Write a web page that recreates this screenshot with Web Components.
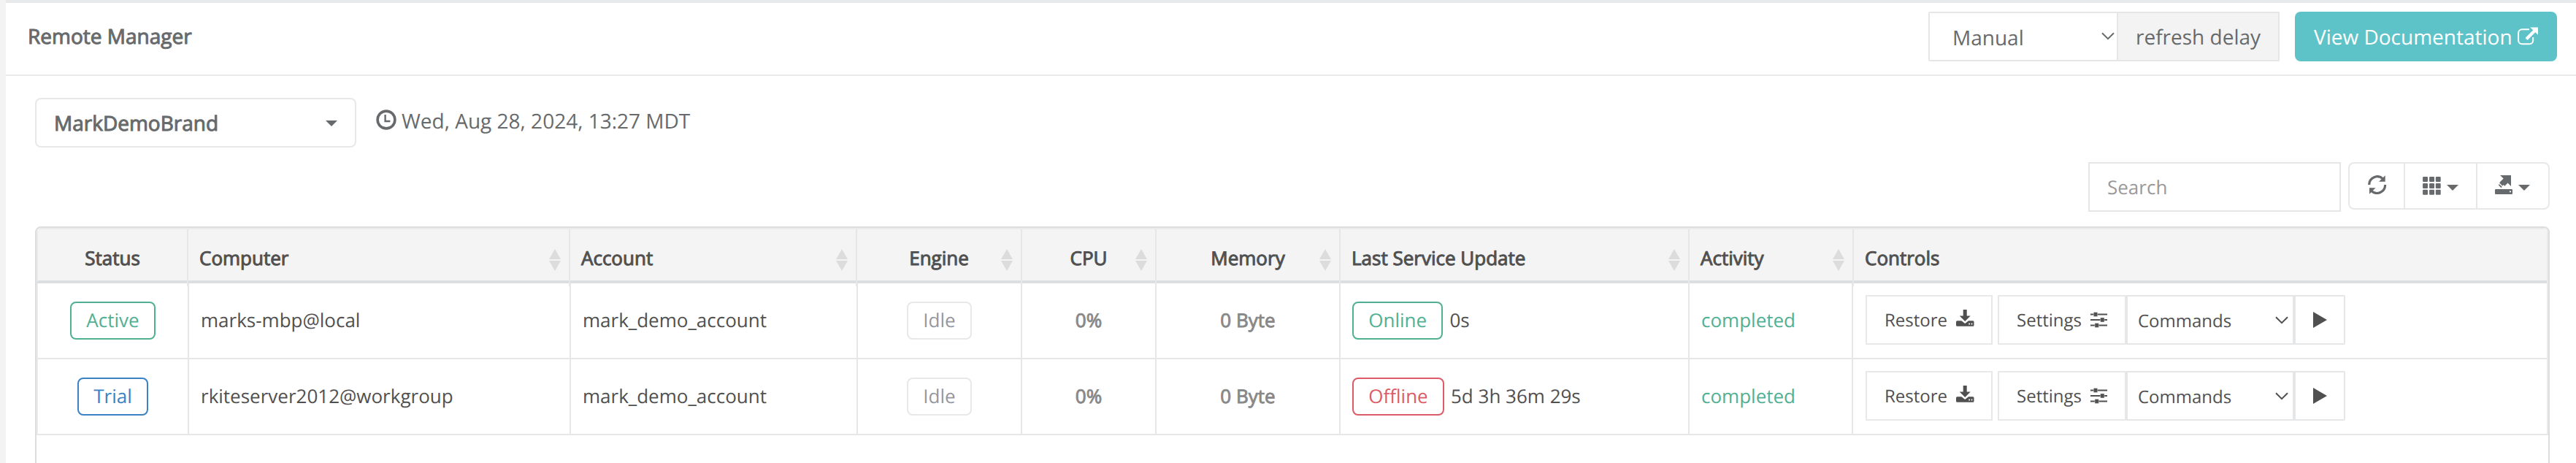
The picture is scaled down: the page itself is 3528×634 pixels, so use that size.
<!DOCTYPE html>
<html lang="en">
<head>
<meta charset="utf-8">
<title>Remote Manager</title>
<style>
html,body{margin:0;height:100%}
body{font-family:"Open Sans","Noto Sans",sans-serif;text-rendering:geometricPrecision;background:#fff;overflow:hidden}
</style>
</head>
<body>
<remote-manager></remote-manager>
<script>
const define = (name, html, setup) => {
  const tpl = document.createElement('template');
  tpl.innerHTML = html;
  customElements.define(name, class extends HTMLElement {
    connectedCallback() {
      if (this.shadowRoot) return;
      const root = this.attachShadow({ mode: 'open' });
      root.append(tpl.content.cloneNode(true));
      if (setup) setup(this, root);
    }
  });
};

const ICONS = {
  clock: [28, 28, '<circle cx="14" cy="14" r="11.9" fill="none" stroke="currentColor" stroke-width="3.6"/><path d="M12.6 7v9h6.8" fill="none" stroke="currentColor" stroke-width="2.4"/>'],
  external: [28, 25, '<path d="M16 3.2H6A5 5 0 0 0 1.1 8v10.500A5 5 0 0 0 6 23.300h10.500a5 5 0 0 0 4.700-4.800V14" fill="none" stroke="currentColor" stroke-width="2"/><path d="M12 16.500 24 4.500" stroke="currentColor" stroke-width="4.200"/><path d="M17.300.5H28v10.300Z" fill="currentColor"/>'],
  refresh: [26, 26, '<path d="M1.700 13A11.200 11.200 0 0 1 20.600 4.800M23.600 13A11.200 11.200 0 0 1 4.700 21.300" fill="none" stroke="currentColor" stroke-width="3.200"/><path d="M23.700.2v8.600H15ZM2 25.800V17.200h8.600Z" fill="currentColor"/>'],
  grid: [25, 25, [0, 9, 17.7].map(y => [0, 9, 17.700].map(x => `<rect x="${x + .1}" y="${y + .1}" width="6.900" height="6.900" rx="1" fill="currentColor"/>`).join('')).join('')],
  caret: [16, 8, '<path d="M0 0h16L8 8Z" fill="currentColor"/>'],
  export: [24, 26, '<path d="M7 0h15v15l-4.400-4.400-4.300 4.200-6-6 4.400-4.200ZM6 10.300l1.700-1.600 4.200 4.200-1.700 1.700ZM5 12.400l1.300 0 3.700 3.600-1.700 1L5 13.600Z" fill="currentColor"/><path fill-rule="evenodd" d="M1 19h22q1 0 1 1v5q0 1-1 1H1q-1 0-1-1v-5q0-1 1-1Zm19 2.600v1.600h2v-1.600Z" fill="currentColor"/>'],
  download: [25, 23, '<path d="M9.700 0h5v8.500h5L12.200 16 4.700 8.500h5Z" fill="currentColor"/><path fill-rule="evenodd" d="M1.500 15.300h6L12.200 19l4.800-3.700h6q1.500 0 1.500 1.500v4.400q0 1.500-1.500 1.500h-21.500q-1.500 0-1.500-1.500v-4.400q0-1.500 1.500-1.500ZM17.300 18.600v1.800h1.600v-1.800Zm3.400 0v1.800h1.600v-1.800Z" fill="currentColor"/>'],
  sliders: [23, 22, '<path d="M0 3.400h23M0 10.900h23M0 18.400h23" stroke="currentColor" stroke-width="2"/><path d="M4.300.4h5.400v6h-5.400ZM13.600 7.900h5.400v6h-5.400ZM6 15.400h5.400v6H6Z" fill="currentColor" stroke="#fff" stroke-width=".4"/>'],
  chevron: [18, 11, '<path d="M1 1.200 9 9.200l8-8" fill="none" stroke="currentColor" stroke-width="2"/>'],
  play: [19, 22, '<path d="M0 0v22L19 11Z" fill="currentColor"/>'],
  sort: [16, 30, '<path d="M8 0l8 14H0ZM0 16h16L8 30Z" fill="currentColor"/>']
};
define('rm-icon', '<style>:host{display:block;flex:none}svg{display:block}</style>', (el, root) => {
  const [w, h, body] = ICONS[el.getAttribute('name')];
  root.innerHTML += `<svg width="${w}" height="${h}" viewBox="0 0 ${w} ${h}">${body}</svg>`;
});

define('rm-badge', `<style>
:host{display:inline-block;box-sizing:border-box;height:52px;margin-top:2px;line-height:46px;padding:0 20.300px;border:2px solid;border-radius:8px;font-size:26px;color:#50b093}
:host([kind=trial]){color:#3b82c4}
:host([kind=offline]){color:#dc5b67}
:host([kind=idle]){color:#96979f;border-color:#e7e8e9}
</style><slot></slot>`);

define('rm-box', `<style>
:host{display:flex;box-sizing:border-box;align-items:center;height:68px;border:2px solid #e5e6e7}
</style><slot></slot>`);

define('rm-header', `<style>
:host{display:flex;box-sizing:border-box;height:104px;border-top:4px solid #e8e9eb;border-bottom:2px solid #e8e9ea;padding:12px 26px 0 30px;align-items:flex-start;font-size:28px;color:#676a6c}
h1{margin:0;font:inherit;line-height:68px;margin-right:auto;-webkit-text-stroke:1px}
.delay{width:260px;padding:4px 3px 0 31px;justify-content:space-between;border-radius:2px 0 0 2px}
.addon{width:221px;padding:1px 0 0 24px;background:#f3f3f3;border-left:0;border-radius:0 2px 2px 0}
a{display:flex;box-sizing:border-box;width:359px;height:68px;margin-left:21px;padding:1px 26px 0;justify-content:space-between;align-items:center;background:#5ec3c8;border-radius:8px;color:#fff}
a rm-icon{margin-top:-3px}
.delay rm-icon{margin-top:-5px}
</style>
<h1>Remote Manager</h1>
<rm-box class="delay"><span>Manual</span><rm-icon name="chevron"></rm-icon></rm-box>
<rm-box class="addon"><span>refresh delay</span></rm-box>
<a><span>View Documentation</span><rm-icon name="external"></rm-icon></a>`);

define('rm-filters', `<style>
:host{display:flex;align-items:flex-start;margin:30px 0 0 40px;height:88px;font-size:28px;color:#676a6c}
.brand{width:440px;padding:1px 24px 0;justify-content:space-between;border-color:#e7e8e9;border-radius:8px}
.brand span{-webkit-text-stroke:1px}
time{display:flex;line-height:64px;gap:7px;margin-left:27px}
time rm-icon{margin-top:16px}
</style>
<rm-box class="brand"><span>MarkDemoBrand</span><rm-icon name="caret"></rm-icon></rm-box>
<time><rm-icon name="clock"></rm-icon>Wed, Aug 28, 2024, 13:27 MDT</time>`);

define('rm-toolbar', `<style>
:host{display:flex;align-items:flex-start;justify-content:flex-end;height:88px;padding-right:36px;color:#676a6c}
.search{width:346px;padding-left:24px;font-size:26px;color:#999}
.group{display:flex;box-sizing:border-box;width:276px;height:65px;margin-left:10px;border:2px solid #e7e8e9;border-radius:8px}
.group div{display:flex;box-sizing:border-box;border-right:2px solid #e7e8e9;padding:16px 0 0 25px;width:76px}
.group div+div{width:99px;padding-left:24px}
.group div:last-child{width:97px;border:0}
.group rm-icon[name=caret]{margin:13px 0 0 8px}
rm-icon[name=grid]{margin-top:2px}
</style>
<rm-box class="search">Search</rm-box>
<div class="group"><div><rm-icon name="refresh"></rm-icon></div><div><rm-icon name="grid"></rm-icon><rm-icon name="caret"></rm-icon></div><div><rm-icon name="export"></rm-icon><rm-icon name="caret"></rm-icon></div></div>`);

define('rm-th', `<style>
:host{display:grid;box-sizing:border-box;align-items:center;border-right:2px solid #e7e7e7;padding-left:15px;line-height:78px;-webkit-text-stroke:1px}
:host([center]){padding-left:0;text-align:center}
:host(:last-child){border-color:#ebebeb}
span,rm-icon{grid-area:1/1}
rm-icon{justify-self:end;margin:6px 11px 0 0;color:#dcdcdc}
:host(:not([sort])) rm-icon{display:none}
</style><span><slot></slot></span><rm-icon name="sort"></rm-icon>`);

define('rm-td', `<style>
:host{display:flex;box-sizing:border-box;align-items:center;gap:9px;border-right:2px solid #e7e7e7;padding:0 0 2px 16px}
:host([center]){padding-left:0;justify-content:center}
:host([muted]){color:#888;-webkit-text-stroke:.9px}
:host([done]){color:#50b093}
:host(:last-child){border-color:#ebebeb;padding-left:17px}
</style><slot></slot>`);

define('rm-controls', `<style>
:host{display:flex;font-size:24px;color:#505050}
rm-box{border-color:#e7e8e9}
.restore{width:174px;padding:0 23px 0 24px;justify-content:space-between}
.settings{width:176px;margin-left:7px;padding:0 24px;justify-content:space-between}
.commands{width:230px;padding:2px 6px 0 14px;justify-content:space-between;border-color:#e5e6e7}
.commands rm-icon{margin-top:-2px}
.run{width:70px;border-color:#e5e6e7;padding-left:24px;border-radius:0 2px 2px 0}
.restore rm-icon{margin-top:-5px}
</style>
<rm-box class="restore"><span>Restore</span><rm-icon name="download"></rm-icon></rm-box>
<rm-box class="settings"><span>Settings</span><rm-icon name="sliders"></rm-icon></rm-box>
<rm-box class="commands"><span>Commands</span><rm-icon name="chevron"></rm-icon></rm-box>
<rm-box class="run"><rm-icon name="play"></rm-icon></rm-box>`);

define('rm-table', `<style>
:host{display:block;box-sizing:border-box;margin:0 36px 0 40px;height:400px;border:2px solid #ddd;border-radius:8px 8px 0 0;font-size:26px;color:#505050;overflow:hidden}
.head,.row{display:grid;box-sizing:border-box}
.head{grid-template-columns:206px 523px 393px 226px 184px 252px 478px 225px 1fr;height:76px;background:#f4f4f4;border-top:2px solid #ebebeb;border-left:2px solid #ebebeb;border-bottom:4px solid #dcdfe2}
.row{grid-template-columns:207px 523px 393px 225px 184px 252px 478px 224px 1fr;height:104px;border-bottom:2px solid #e7e7e7;border-left:2px solid #ebebeb}
</style>
<div class="head"><rm-th center>Status</rm-th><rm-th sort>Computer</rm-th><rm-th sort>Account</rm-th><rm-th center sort>Engine</rm-th><rm-th center sort>CPU</rm-th><rm-th center sort>Memory</rm-th><rm-th sort>Last Service Update</rm-th><rm-th sort>Activity</rm-th><rm-th>Controls</rm-th></div>
<div class="row"><rm-td center><rm-badge>Active</rm-badge></rm-td><rm-td>marks-mbp@local</rm-td><rm-td>mark_demo_account</rm-td><rm-td center><rm-badge kind="idle">Idle</rm-badge></rm-td><rm-td center muted>0%</rm-td><rm-td center muted>0 Byte</rm-td><rm-td><rm-badge>Online</rm-badge>0s</rm-td><rm-td done>completed</rm-td><rm-td><rm-controls></rm-controls></rm-td></div>
<div class="row"><rm-td center><rm-badge kind="trial">Trial</rm-badge></rm-td><rm-td>rkiteserver2012@workgroup</rm-td><rm-td>mark_demo_account</rm-td><rm-td center><rm-badge kind="idle">Idle</rm-badge></rm-td><rm-td center muted>0%</rm-td><rm-td center muted>0 Byte</rm-td><rm-td><rm-badge kind="offline">Offline</rm-badge>5d 3h 36m 29s</rm-td><rm-td done>completed</rm-td><rm-td><rm-controls></rm-controls></rm-td></div>`);

define('remote-manager', `<style>
:host{display:block;box-sizing:border-box;height:634px;border-left:8px solid #f3f3f3;overflow:hidden;background:#fff}
</style>
<rm-header></rm-header><rm-filters></rm-filters><rm-toolbar></rm-toolbar><rm-table></rm-table>`);
</script>
</body>
</html>
